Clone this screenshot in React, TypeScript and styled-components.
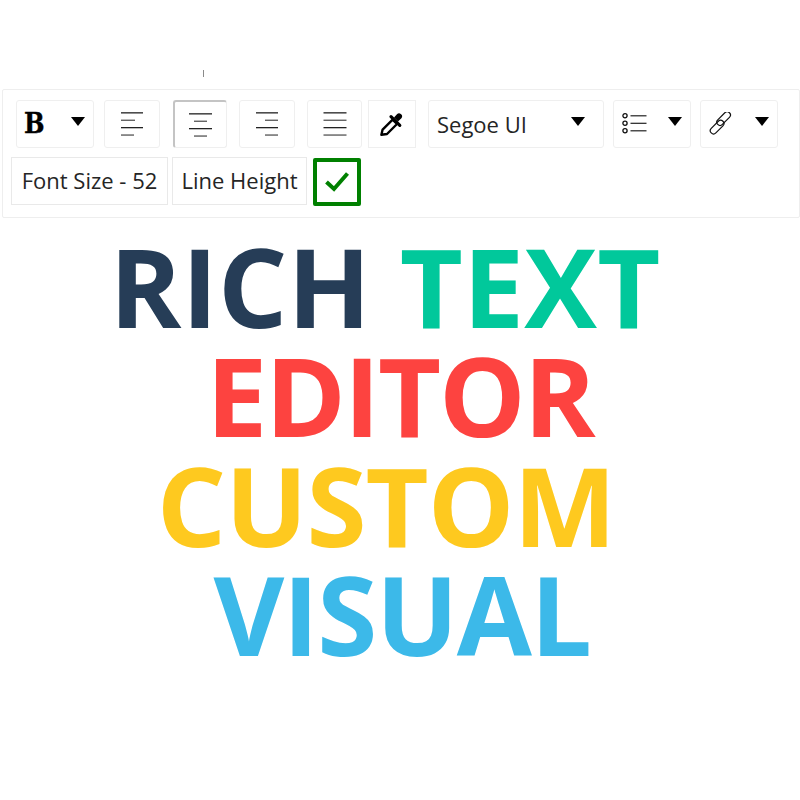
import React from "react";
import styled, { createGlobalStyle } from "styled-components";

const GlobalStyle = createGlobalStyle`
    html, body {
        margin: 0;
        padding: 0;
        background: #fff;
    }
    body {
        font-family: "Open Sans", "Noto Sans", sans-serif;
    }
`;

const Page = styled.div`
    width: 800px;
    height: 800px;
    overflow: hidden;
    padding-top: 70px;
    box-sizing: border-box;
`;

const Ruler = styled.div`
    width: 1px;
    height: 7px;
    margin-left: 203px;
    background: #8a8a8a;
`;

const Toolbar = styled.div`
    box-sizing: border-box;
    width: 798px;
    height: 129px;
    margin: 12px 0 0 2px;
    border: 1px solid #eeeeee;
    border-radius: 2px;
    padding: 10px 0 0 8px;
    display: flex;
    flex-direction: column;
`;

const Row = styled.div<{ $top?: number }>`
    display: flex;
    margin-top: ${p => p.$top ?? 0}px;
`;

const Btn = styled.div<{
    $w: number;
    $ml?: number;
    $active?: boolean;
    $square?: boolean;
}>`
    box-sizing: border-box;
    width: ${p => p.$w}px;
    height: 48px;
    margin-left: ${p => p.$ml ?? 0}px;
    background: #fff;
    border: 1px solid #efefef;
    border-radius: ${p => (p.$square ? 0 : 3)}px;
    ${p =>
        p.$active &&
        "border-top: 2px solid #c4c4c4; border-left: 2px solid #c4c4c4;"}
    display: flex;
    align-items: center;
    justify-content: center;
    flex-shrink: 0;
`;

const Split = styled(Btn)<{ $pl: number; $pr: number }>`
    justify-content: space-between;
    padding: 0 ${p => p.$pr}px 0 ${p => p.$pl}px;
`;

const Bold = styled.span`
    font-family: "DejaVu Serif", serif;
    font-weight: 700;
    font-size: 27px;
    line-height: 48px;
    color: #000;
    transform: scaleX(0.9);
    transform-origin: left center;
    -webkit-text-stroke: 0.4px #000;
`;

const Caret = styled.span`
    width: 0;
    height: 0;
    border-left: 7.5px solid transparent;
    border-right: 7.5px solid transparent;
    border-top: 9px solid #000;
    margin-top: -5px;
`;

const Label = styled.span`
    font-size: 22px;
    color: #252525;
    white-space: nowrap;
`;

const TextBtn = styled(Btn)`
    border-color: #e9e9e9;
    padding-bottom: 2px;
`;

const CheckBtn = styled(Btn)`
    border: 4px solid #008000;
    border-radius: 2px;
    margin-top: 1px;
`;

const Heading = styled.div`
    margin-top: 13px;
    text-align: center;
    font-size: 109px;
    font-weight: 700;
    line-height: 109.3px;
`;

const Line = styled.div<{ $shift?: number; $spacing?: number }>`
    white-space: pre;
    margin-left: ${p => p.$shift ?? 0}px;
    letter-spacing: ${p => p.$spacing ?? 0}px;
`;

const Word = styled.span<{ $color: string }>`
    color: ${p => p.$color};
`;

type AlignProps = { rows: [number, number][] };
function AlignIcon({ rows }: AlignProps) {
    return (
        <svg width="24" height="24" viewBox="0 0 24 24">
            {rows.map(([x, w], i) => (
                <rect
                    key={i}
                    x={x}
                    y={0.2 + i * 7.4}
                    width={w}
                    height={1.3}
                    fill={i % 2 ? "#555" : "#222"}
                />
            ))}
        </svg>
    );
}

function DropperIcon() {
    return (
        <svg width="24" height="24" viewBox="0 0 24 24">
            <path
                d="M1.4 22.8 2.6 17.6 12.6 7.6 17 12 7 22z"
                fill="#fff"
                stroke="#000"
                strokeWidth="2.4"
                strokeLinejoin="round"
            />
            <path d="M11 4.6 19.8 13.4" stroke="#000" strokeWidth="3.2" strokeLinecap="round" />
            <path
                d="M14 5.5 17.2 2c1-1 2.6-1 3.6 0l.6.6c1 1 1 2.6 0 3.6L18 9.6z"
                fill="#000"
            />
        </svg>
    );
}

function ListIcon() {
    return (
        <svg width="26" height="22" viewBox="0 0 26 22" fill="none">
            {[2.8, 10.3, 17.8].map(y => (
                <g key={y}>
                    <circle cx="3" cy={y} r="2.1" stroke="#111" strokeWidth="1.3" />
                    <rect x="8.5" y={y - 0.6} width="16" height="1.2" fill="#222" />
                </g>
            ))}
        </svg>
    );
}

function LinkIcon() {
    return (
        <svg width="24" height="24" viewBox="0 0 24 24" fill="none">
            <g stroke="#111" strokeWidth="1.2">
                <rect
                    x="12.35"
                    y="-1.65"
                    width="6.5"
                    height="16.5"
                    rx="3.25"
                    transform="rotate(45 15.6 6.6)"
                />
                <rect
                    x="5.85"
                    y="6.85"
                    width="6.5"
                    height="16.5"
                    rx="3.25"
                    transform="rotate(45 9.1 15.1)"
                />
            </g>
        </svg>
    );
}

function CheckIcon() {
    return (
        <svg width="24" height="20" viewBox="0 0 24 20" fill="none">
            <path
                d="M1.5 10 9 17 22.5 1.5"
                stroke="#008000"
                strokeWidth="4"
            />
        </svg>
    );
}

export default function App() {
    return (
        <Page>
            <GlobalStyle />
            <Ruler />
            <Toolbar>
                <Row>
                    <Split $w={78} $ml={5} $pl={7} $pr={8}>
                        <Bold>B</Bold>
                        <Caret />
                    </Split>
                    <Btn $w={56} $ml={10}>
                        <AlignIcon rows={[[1, 22], [1, 14], [1, 22], [1, 13]]} />
                    </Btn>
                    <Btn $w={54} $ml={13} $active>
                        <AlignIcon rows={[[0, 23], [5, 13], [0, 23], [5, 13]]} />
                    </Btn>
                    <Btn $w={56} $ml={12}>
                        <AlignIcon rows={[[1, 22], [10, 13], [1, 22], [10, 13]]} />
                    </Btn>
                    <Btn $w={55} $ml={12}>
                        <AlignIcon rows={[[0.5, 23], [0.5, 23], [0.5, 23], [0.5, 23]]} />
                    </Btn>
                    <Btn $w={48} $ml={6} $square>
                        <DropperIcon />
                    </Btn>
                    <Split $w={176} $ml={12} $pl={8} $pr={18}>
                        <Label>Segoe UI</Label>
                        <Caret />
                    </Split>
                    <Split $w={78} $ml={9} $pl={8} $pr={8}>
                        <ListIcon />
                        <Caret />
                    </Split>
                    <Split $w={78} $ml={9} $pl={7} $pr={8}>
                        <LinkIcon />
                        <Caret />
                    </Split>
                </Row>
                <Row $top={9}>
                    <TextBtn $w={157} $square>
                        <Label>Font Size - 52</Label>
                    </TextBtn>
                    <TextBtn $w={135} $ml={4} $square>
                        <Label>Line Height</Label>
                    </TextBtn>
                    <CheckBtn $w={48} $ml={6}>
                        <CheckIcon />
                    </CheckBtn>
                </Row>
            </Toolbar>
            <Heading>
                <Line $shift={-30} $spacing={0.2}>
                    <Word $color="#263d57">RICH </Word>
                    <Word $color="#01c89b">TEXT</Word>
                </Line>
                <Line $shift={0} $spacing={-2}>
                    <Word $color="#fd4340">EDITOR</Word>
                </Line>
                <Line $shift={-28} $spacing={-1}>
                    <Word $color="#fec91f">CUSTOM</Word>
                </Line>
                <Line $shift={4} $spacing={-1.5}>
                    <Word $color="#3cb9e9">VISUAL</Word>
                </Line>
            </Heading>
        </Page>
    );
}
